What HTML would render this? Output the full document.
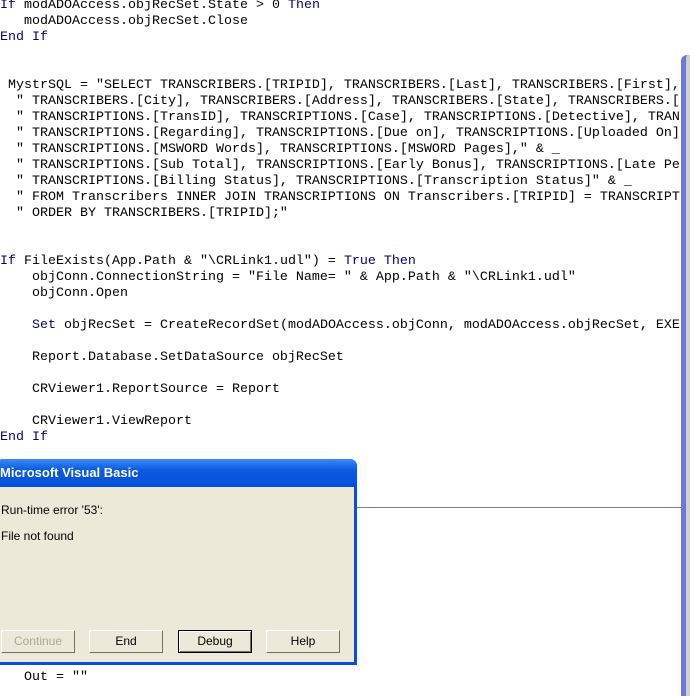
<!DOCTYPE html>
<html><head><style>
body{margin:0;width:690px;height:696px;overflow:hidden;background:#fff;position:relative}
pre{position:absolute;left:0;top:-2px;margin:0;font:13.33px/16px "Liberation Mono",monospace;color:#000}
.k{color:#00007f}
.rw{position:absolute;left:681px;top:55px;width:9px;height:641px;background:#d4d0c8;border-left:5px solid #6b7ad8;border-top-left-radius:6px}
.hl{position:absolute;left:357px;top:507px;width:324px;height:1px;background:#808080}
.dlg{position:absolute;left:-4px;top:459px;width:361px;height:206px;background:#0a4fd6;border-radius:7px 7px 0 0}
.tt{position:absolute;left:0;top:0;right:0;height:28px;background:linear-gradient(#3d8bf5,#0a5ae0 40%,#0550d8);border-radius:7px 7px 0 0;color:#fff;font:bold 13px "Liberation Sans",sans-serif;line-height:28px;padding-left:4px}
.bd{position:absolute;left:3px;top:28px;right:3px;bottom:3px;background:#ece9d8;font:12px "Liberation Sans",sans-serif}
.b{position:absolute;top:143px;width:72px;height:21px;border:1px solid;border-color:#fff #716f64 #716f64 #fff;background:#ece9d8;text-align:center;line-height:21px;font:12px/21px "Liberation Sans",sans-serif}
</style></head><body>
<pre><span class="k">If</span> modADOAccess.objRecSet.State &gt; 0 <span class="k">Then</span>
   modADOAccess.objRecSet.Close
<span class="k">End If</span>


 MystrSQL = "SELECT TRANSCRIBERS.[TRIPID], TRANSCRIBERS.[Last], TRANSCRIBERS.[First],
  " TRANSCRIBERS.[City], TRANSCRIBERS.[Address], TRANSCRIBERS.[State], TRANSCRIBERS.[
  " TRANSCRIPTIONS.[TransID], TRANSCRIPTIONS.[Case], TRANSCRIPTIONS.[Detective], TRAN
  " TRANSCRIPTIONS.[Regarding], TRANSCRIPTIONS.[Due on], TRANSCRIPTIONS.[Uploaded On]
  " TRANSCRIPTIONS.[MSWORD Words], TRANSCRIPTIONS.[MSWORD Pages]," &amp; _
  " TRANSCRIPTIONS.[Sub Total], TRANSCRIPTIONS.[Early Bonus], TRANSCRIPTIONS.[Late Pe
  " TRANSCRIPTIONS.[Billing Status], TRANSCRIPTIONS.[Transcription Status]" &amp; _
  " FROM Transcribers INNER JOIN TRANSCRIPTIONS ON Transcribers.[TRIPID] = TRANSCRIPT
  " ORDER BY TRANSCRIBERS.[TRIPID];"


<span class="k">If</span> FileExists(App.Path &amp; "\CRLink1.udl") = <span class="k">True Then</span>
    objConn.ConnectionString = "File Name= " &amp; App.Path &amp; "\CRLink1.udl"
    objConn.Open

    <span class="k">Set</span> objRecSet = CreateRecordSet(modADOAccess.objConn, modADOAccess.objRecSet, EXE

    Report.Database.SetDataSource objRecSet

    CRViewer1.ReportSource = Report

    CRViewer1.ViewReport
<span class="k">End If</span>














   Out = ""</pre>
<div class="hl"></div>
<div class="rw"></div>
<div class="dlg"><div class="tt">Microsoft Visual Basic</div>
<div class="bd">
<div style="position:absolute;left:2px;top:16px">Run-time error '53':</div>
<div style="position:absolute;left:2px;top:42px">File not found</div>
<div class="b" style="left:2px;color:#aca899">Continue</div>
<div class="b" style="left:90px">End</div>
<div class="b" style="left:179px;border:1px solid #000;box-shadow:inset 1px 1px #fff,inset -1px -1px #716f64">Debug</div>
<div class="b" style="left:267px">Help</div>
</div></div>
</body></html>
